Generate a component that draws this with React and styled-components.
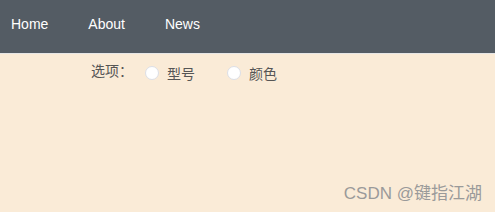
import React, { useState } from 'react';
import styled, { createGlobalStyle } from 'styled-components';

const GlobalStyle = createGlobalStyle`
  html, body {
    margin: 0;
    padding: 0;
    background: #faebd7;
    font-family: "Liberation Sans", "Noto Sans CJK SC", sans-serif;
  }
`;

const Page = styled.div`
  position: relative;
  width: 100%;
  height: 212px;
  background: #faebd7;
  overflow: hidden;
`;

const NavBar = styled.nav`
  display: flex;
  align-items: center;
  box-sizing: border-box;
  height: 54px;
  padding: 0 0 5px 11px;
  gap: 40px;
  background: #545c64;
  border-bottom: 1px solid #e6e6e6;
`;

const NavLink = styled.a`
  color: #fff;
  font-size: 14px;
  text-decoration: none;
  cursor: pointer;
`;

const Options = styled.div`
  display: flex;
  align-items: center;
  padding: 9px 0 0 91px;
  color: #555;
  font-size: 14px;
  font-family: "Noto Sans CJK SC", sans-serif;
`;

const Label = styled.span`
  margin-right: 12px;
  position: relative;
  top: -3px;
`;

const Choice = styled.label`
  display: flex;
  align-items: center;
  margin-right: 32px;
  cursor: pointer;
`;

const Dot = styled.span`
  box-sizing: border-box;
  width: 14px;
  height: 14px;
  border-radius: 50%;
  border: 1px solid #dcdfe6;
  background: #fff;
  margin-right: 8px;
  display: flex;
  align-items: center;
  justify-content: center;
  &::after {
    content: '';
    width: 4px;
    height: 4px;
    border-radius: 50%;
    background: ${(p) => (p.$checked ? '#409eff' : 'transparent')};
  }
`;

const Mark = styled.div`
  position: absolute;
  right: 13px;
  bottom: 8px;
  color: #9a9a9a;
  font-size: 17px;
  font-family: "Liberation Sans", "Noto Sans CJK SC", sans-serif;
`;

export default function App() {
  const [value, setValue] = useState(null);
  const items = ['型号', '颜色'];
  return (
    <Page>
      <GlobalStyle />
      <NavBar>
        <NavLink>Home</NavLink>
        <NavLink>About</NavLink>
        <NavLink>News</NavLink>
      </NavBar>
      <Options>
        <Label>选项：</Label>
        {items.map((it) => (
          <Choice key={it} onClick={() => setValue(it)}>
            <Dot $checked={value === it} />
            {it}
          </Choice>
        ))}
      </Options>
      <Mark>CSDN @键指江湖</Mark>
    </Page>
  );
}
